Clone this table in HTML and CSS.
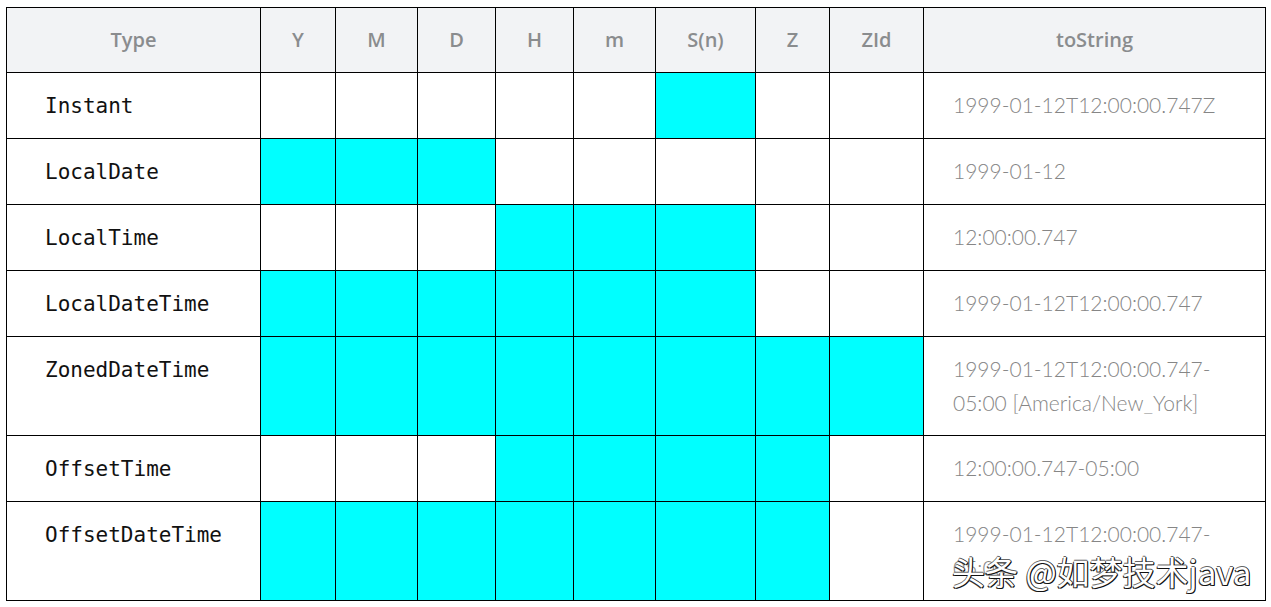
FILE: index.html
```html
<!DOCTYPE html>
<html>
<head>
<meta charset="utf-8">
<link rel="stylesheet" href="styles.css">
</head>
<body>
<div class="page">
  <div class="grid">
    <div class="hd">Type</div><div class="hd">Y</div><div class="hd">M</div><div class="hd">D</div><div class="hd">H</div><div class="hd">m</div><div class="hd">S(n)</div><div class="hd">Z</div><div class="hd">ZId</div><div class="hd">toString</div>

    <div class="ty">Instant</div><div></div><div></div><div></div><div></div><div></div><div class="on"></div><div></div><div></div><div class="ts">1999-01-12T12:00:00.747Z</div>

    <div class="ty">LocalDate</div><div class="on"></div><div class="on"></div><div class="on"></div><div></div><div></div><div></div><div></div><div></div><div class="ts">1999-01-12</div>

    <div class="ty">LocalTime</div><div></div><div></div><div></div><div class="on"></div><div class="on"></div><div class="on"></div><div></div><div></div><div class="ts">12:00:00.747</div>

    <div class="ty">LocalDateTime</div><div class="on"></div><div class="on"></div><div class="on"></div><div class="on"></div><div class="on"></div><div class="on"></div><div></div><div></div><div class="ts">1999-01-12T12:00:00.747</div>

    <div class="ty">ZonedDateTime</div><div class="on"></div><div class="on"></div><div class="on"></div><div class="on"></div><div class="on"></div><div class="on"></div><div class="on"></div><div class="on"></div><div class="ts">1999-01-12T12:00:00.747-<br>05:00 [America/New_York]</div>

    <div class="ty">OffsetTime</div><div></div><div></div><div></div><div class="on"></div><div class="on"></div><div class="on"></div><div class="on"></div><div></div><div class="ts">12:00:00.747-05:00</div>

    <div class="ty">OffsetDateTime</div><div class="on"></div><div class="on"></div><div class="on"></div><div class="on"></div><div class="on"></div><div class="on"></div><div class="on"></div><div></div><div class="ts">1999-01-12T12:00:00.747-<br>05:00</div>
  </div>
  <div class="mark">头条 @如梦技术java</div>
</div>
</body>
</html>
```

FILE: styles.css
```css
html, body {
  margin: 0;
  padding: 0;
  background: #ffffff;
}

.page {
  position: relative;
  width: 1271px;
  height: 607px;
  overflow: hidden;
  padding: 7px 0 0 6px;
  box-sizing: border-box;
}

.grid {
  display: grid;
  width: 1260px;
  box-sizing: border-box;
  background: #000;
  padding: 1px;
  gap: 1px;
  grid-template-columns: 253px 74px 81px 77px 77px 81px 99px 73px 93px 341px;
  grid-template-rows: 64px 65px 65px 65px 65px 98px 65px 98px;
  overflow: hidden;
}

.grid > div {
  background: #ffffff;
  overflow: hidden;
}

.grid > .on {
  background: #00ffff;
}

.grid > .hd {
  background: #f2f3f5;
  color: #8a8c8e;
  font-family: "Open Sans", "Noto Sans", sans-serif;
  font-weight: 600;
  font-size: 20px;
  display: flex;
  align-items: center;
  justify-content: center;
  padding-bottom: 2px;
  box-sizing: border-box;
}

.grid > .ty {
  font-family: "DejaVu Sans Mono", "Liberation Mono", monospace;
  font-size: 21px;
  color: #111;
  line-height: 34px;
  padding: 16px 0 0 38px;
}

.grid > .ts {
  font-family: "Lato", "Open Sans", sans-serif;
  font-weight: 300;
  font-size: 21px;
  color: #868686;
  line-height: 34px;
  padding: 15px 0 0 29px;
}

.mark {
  position: absolute;
  left: 952px;
  top: 549px;
  font-family: "Noto Sans CJK SC", "Noto Sans", sans-serif;
  font-size: 33px;
  line-height: 44px;
  color: #ffffff;
  text-shadow: 1px 1px 0 #111, -1px 1px 0 #333, 1px 0 0 #222, 0 -1px 0 #666;
}
```
